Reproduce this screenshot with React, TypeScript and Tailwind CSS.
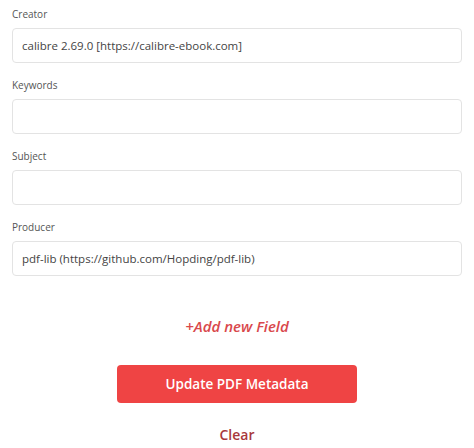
const fields = [
    { label: 'Creator', value: 'calibre 2.69.0 [https://calibre-ebook.com]' },
    { label: 'Keywords', value: '' },
    { label: 'Subject', value: '' },
    { label: 'Producer', value: 'pdf-lib (https://github.com/Hopding/pdf-lib)' },
];

export default function App() {
    return (
        <main
            className="w-[474px] h-[448px] bg-white px-3 pt-[6px] overflow-hidden"
            style={{ fontFamily: '"Open Sans", "Noto Sans", sans-serif' }}
        >
            <div className="flex flex-col gap-[14px]">
                {fields.map((field) => (
                    <div key={field.label} className="flex flex-col">
                        <label className="text-[10px] leading-[16px] text-[#555] mb-[6px]">{field.label}</label>
                        <input
                            type="text"
                            defaultValue={field.value}
                            className="h-[35px] w-full rounded-[4px] border border-[#e3e3e3] px-[9px] text-[11.5px] text-[#444] outline-none"
                        />
                    </div>
                ))}
            </div>
            <div className="flex flex-col items-center">
                <button className="mt-[40px] text-[15px] leading-[20px] italic font-semibold text-[#d9484c]">
                    +Add new Field
                </button>
                <button className="mt-[29px] w-[240px] h-[38px] rounded-[4px] bg-[#ef4444] text-white text-[13.5px] font-semibold">
                    Update PDF Metadata
                </button>
                <button className="mt-[22px] text-[14px] leading-[20px] font-semibold text-[#a8383b]">
                    Clear
                </button>
            </div>
        </main>
    );
}
